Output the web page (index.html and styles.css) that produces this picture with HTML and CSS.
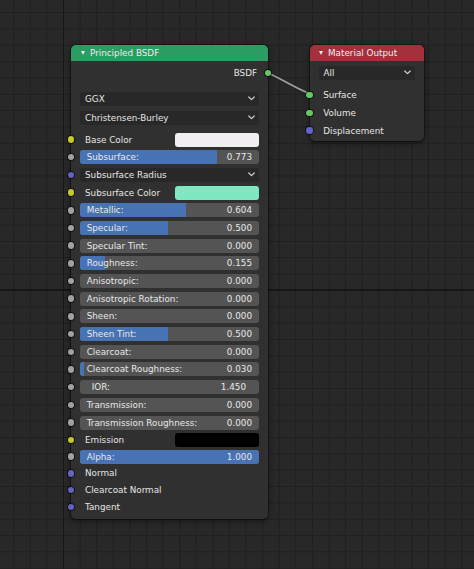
FILE: index.html
```html
<!DOCTYPE html>
<html>
<head>
<meta charset="utf-8">
<link rel="stylesheet" href="styles.css">
</head>
<body>
<div class="canvas">
  <svg class="links" width="474" height="569" viewBox="0 0 474 569">
    <path d="M268 73 C 280 78, 296 88.5, 309.5 93.5" class="link"/>
  </svg>

  <div class="node node-bsdf">
    <div class="node-header hdr-green"><span class="tri"></span><span>Principled BSDF</span></div>
    <div class="node-body">
      <div class="out-row">BSDF<span class="socket sock-shader sock-right"></span></div>
      <div class="dropdown dd-first"><span>GGX</span><svg class="chev" width="7" height="5" viewBox="0 0 7 5"><polyline points="0.8,1 3.5,3.7 6.2,1"/></svg></div>
      <div class="dropdown dd-second"><span>Christensen-Burley</span><svg class="chev" width="7" height="5" viewBox="0 0 7 5"><polyline points="0.8,1 3.5,3.7 6.2,1"/></svg></div>
      <div class="inputs">
        <div class="row"><span class="socket sock-color"></span><span class="label">Base Color</span><span class="swatch sw-white"></span></div>
        <div class="row"><span class="socket sock-float"></span><div class="slider"><div class="fill" style="width:76.5%"></div><span class="sl-label">Subsurface:</span><span class="sl-val">0.773</span></div></div>
        <div class="row"><span class="socket sock-vector"></span><div class="dropdown dd-row"><span>Subsurface Radius</span><svg class="chev" width="7" height="5" viewBox="0 0 7 5"><polyline points="0.8,1 3.5,3.7 6.2,1"/></svg></div></div>
        <div class="row"><span class="socket sock-color"></span><span class="label">Subsurface Color</span><span class="swatch sw-mint"></span></div>
        <div class="row"><span class="socket sock-float"></span><div class="slider"><div class="fill" style="width:59.2%"></div><span class="sl-label">Metallic:</span><span class="sl-val">0.604</span></div></div>
        <div class="row"><span class="socket sock-float"></span><div class="slider"><div class="fill" style="width:49%"></div><span class="sl-label">Specular:</span><span class="sl-val">0.500</span></div></div>
        <div class="row"><span class="socket sock-float"></span><div class="slider"><span class="sl-label">Specular Tint:</span><span class="sl-val">0.000</span></div></div>
        <div class="row"><span class="socket sock-float"></span><div class="slider"><div class="fill" style="width:14%"></div><span class="sl-label">Roughness:</span><span class="sl-val">0.155</span></div></div>
        <div class="row"><span class="socket sock-float"></span><div class="slider"><span class="sl-label">Anisotropic:</span><span class="sl-val">0.000</span></div></div>
        <div class="row"><span class="socket sock-float"></span><div class="slider"><span class="sl-label">Anisotropic Rotation:</span><span class="sl-val">0.000</span></div></div>
        <div class="row"><span class="socket sock-float"></span><div class="slider"><span class="sl-label">Sheen:</span><span class="sl-val">0.000</span></div></div>
        <div class="row"><span class="socket sock-float"></span><div class="slider"><div class="fill" style="width:49%"></div><span class="sl-label">Sheen Tint:</span><span class="sl-val">0.500</span></div></div>
        <div class="row"><span class="socket sock-float"></span><div class="slider"><span class="sl-label">Clearcoat:</span><span class="sl-val">0.000</span></div></div>
        <div class="row"><span class="socket sock-float"></span><div class="slider"><div class="fill" style="width:2.5%"></div><span class="sl-label">Clearcoat Roughness:</span><span class="sl-val">0.030</span></div></div>
        <div class="row"><span class="socket sock-float"></span><div class="slider numfield"><span class="sl-label">IOR:</span><span class="sl-val">1.450</span></div></div>
        <div class="row"><span class="socket sock-float"></span><div class="slider"><span class="sl-label">Transmission:</span><span class="sl-val">0.000</span></div></div>
        <div class="row"><span class="socket sock-float"></span><div class="slider"><span class="sl-label">Transmission Roughness:</span><span class="sl-val">0.000</span></div></div>
        <div class="row row-s"><span class="socket sock-color"></span><span class="label">Emission</span><span class="swatch sw-black"></span></div>
        <div class="row row-s"><span class="socket sock-float"></span><div class="slider"><div class="fill" style="width:100%"></div><span class="sl-label">Alpha:</span><span class="sl-val">1.000</span></div></div>
        <div class="row row-s"><span class="socket sock-vector"></span><span class="label">Normal</span></div>
        <div class="row row-s"><span class="socket sock-vector"></span><span class="label">Clearcoat Normal</span></div>
        <div class="row row-s"><span class="socket sock-vector"></span><span class="label">Tangent</span></div>
      </div>
    </div>
  </div>

  <div class="node node-output">
    <div class="node-header hdr-red"><span class="tri"></span><span>Material Output</span></div>
    <div class="node-body">
      <div class="dropdown dd-out"><span>All</span><svg class="chev" width="7" height="5" viewBox="0 0 7 5"><polyline points="0.8,1 3.5,3.7 6.2,1"/></svg></div>
      <div class="inputs-out">
        <div class="row row-out"><span class="socket sock-shader"></span><span class="label label-out">Surface</span></div>
        <div class="row row-out"><span class="socket sock-shader"></span><span class="label label-out">Volume</span></div>
        <div class="row row-out"><span class="socket sock-vector"></span><span class="label label-out">Displacement</span></div>
      </div>
    </div>
  </div>
</div>
</body>
</html>
```

FILE: styles.css
```css
html, body {
  margin: 0;
  padding: 0;
}

body {
  width: 474px;
  height: 569px;
  overflow: hidden;
  font-family: "DejaVu Sans", "Liberation Sans", sans-serif;
  font-size: 8.8px;
  color: #e6e6e6;
}

.canvas {
  position: relative;
  width: 474px;
  height: 569px;
  background-color: #282828;
  background-image:
    linear-gradient(90deg, transparent 62.5px, #161616 62.5px, #161616 63.6px, transparent 63.6px),
    linear-gradient(180deg, transparent 289.5px, #161616 289.5px, #161616 290.6px, transparent 290.6px),
    linear-gradient(90deg, #1f1f1f 1px, transparent 1px),
    linear-gradient(180deg, #1f1f1f 1px, transparent 1px);
  background-size: 474px 569px, 474px 569px, 16.6px 16.6px, 16.35px 16.35px;
  background-position: 0 0, 0 0, 13.2px 0, 0 12.05px;
  background-repeat: no-repeat, no-repeat, repeat, repeat;
}

.links {
  position: absolute;
  left: 0;
  top: 0;
}

.link {
  fill: none;
  stroke: #9e9e9e;
  stroke-width: 1.8;
}

.node {
  position: absolute;
  background: #303030;
  border-radius: 5px;
  box-shadow: 0 0 0 1px rgba(0, 0, 0, 0.35), 0 2px 6px rgba(0, 0, 0, 0.45);
}

.node-bsdf {
  left: 71px;
  top: 45px;
  width: 197px;
}

.node-output {
  left: 309.5px;
  top: 45px;
  width: 114.5px;
}

.node-header {
  height: 16px;
  display: flex;
  align-items: center;
  gap: 5px;
  padding-left: 10px;
  border-radius: 5px 5px 0 0;
  color: #ececec;
}

.node-output .node-header {
  height: 15.5px;
  padding-left: 9.5px;
}

.hdr-green {
  background: #2b9d62;
}

.hdr-red {
  background: #a3313c;
}

.tri {
  width: 0;
  height: 0;
  border-left: 2.6px solid transparent;
  border-right: 2.6px solid transparent;
  border-top: 4px solid #e8e8e8;
}

.node-body {
  padding: 0 9px 3.2px;
}

.node-output .node-body {
  padding-bottom: 2px;
}

.out-row {
  position: relative;
  height: 16px;
  margin-top: 4px;
  display: flex;
  align-items: center;
  justify-content: flex-end;
  padding-right: 2px;
}

.socket {
  position: absolute;
  left: -12.3px;
  top: 50%;
  width: 6.5px;
  height: 6.5px;
  margin-top: -3.25px;
  border-radius: 50%;
  box-shadow: 0 0 0 1px rgba(0, 0, 0, 0.55);
}

.sock-right {
  left: auto;
  right: -12.3px;
}

.sock-shader { background: #63c763; }
.sock-color { background: #c7c729; }
.sock-float { background: #a1a1a1; }
.sock-vector { background: #6363c7; }

.dropdown {
  height: 14px;
  border-radius: 3px;
  background: #282828;
  display: flex;
  align-items: center;
  justify-content: space-between;
  padding: 0 4px 0 5px;
  color: #e6e6e6;
}

.dd-first {
  margin-top: 10.7px;
}

.dd-second {
  margin-top: 5.2px;
}

.dd-row {
  flex: 1;
}

.dd-out {
  margin-top: 5.2px;
}

.chev {
  display: block;
}

.chev polyline {
  fill: none;
  stroke: #d0d0d0;
  stroke-width: 1.2;
  stroke-linecap: round;
  stroke-linejoin: round;
}

.inputs {
  margin-top: 5.8px;
}

.inputs-out {
  margin-top: 6.4px;
}

.row {
  position: relative;
  height: 17.7px;
  display: flex;
  align-items: center;
}

.row-s {
  height: 16.8px;
}

.row-out {
  height: 17.8px;
}

.label {
  padding-left: 5px;
  color: #e6e6e6;
}

.label-out {
  padding-left: 4.7px;
}

.swatch {
  margin-left: auto;
  width: 84.5px;
  height: 14px;
  border-radius: 3px;
}

.sw-white { background: #f1eff1; }
.sw-mint { background: #7de8c1; }
.sw-black { background: #000000; }

.slider {
  position: relative;
  flex: 1;
  height: 14px;
  background: #545454;
  border-radius: 3px;
  overflow: hidden;
  display: flex;
  align-items: center;
  justify-content: space-between;
  padding: 0 7px 0 6.7px;
}

.numfield {
  padding: 0 13px 0 11.7px;
}

.fill {
  position: absolute;
  left: 0;
  top: 0;
  bottom: 0;
  background: #4772b3;
}

.sl-label,
.sl-val {
  position: relative;
  color: #e8e8e8;
}
```
